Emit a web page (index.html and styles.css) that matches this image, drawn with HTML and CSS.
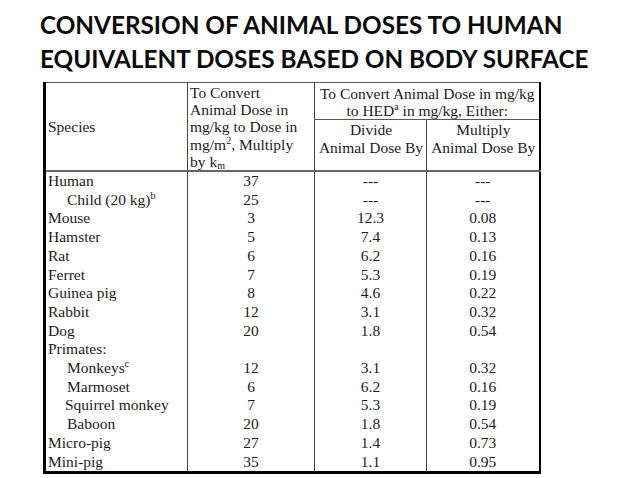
FILE: index.html
```html
<!DOCTYPE html>
<html>
<head>
<meta charset="utf-8">
<link rel="stylesheet" href="styles.css">
</head>
<body>
<div class="slide">
  <h1 class="title">CONVERSION OF ANIMAL DOSES TO HUMAN<br>EQUIVALENT DOSES BASED ON BODY SURFACE</h1>
  <table class="doses">
    <colgroup>
      <col class="c-species">
      <col class="c-km">
      <col class="c-div">
      <col class="c-mul">
    </colgroup>
    <thead>
      <tr class="h1row">
        <th rowspan="2" class="h-species">Species</th>
        <th rowspan="2" class="h-km">To Convert<br>Animal Dose in<br>mg/kg to Dose in<br>mg/m<sup>2</sup>, Multiply<br>by k<sub>m</sub></th>
        <th colspan="2" class="h-hed">To Convert Animal Dose in mg/kg<br>to HED<sup>a</sup> in mg/kg, Either:</th>
      </tr>
      <tr class="h2row">
        <th class="h-sub">Divide<br>Animal Dose By</th>
        <th class="h-sub">Multiply<br>Animal Dose By</th>
      </tr>
    </thead>
    <tbody>
      <tr><td class="sp">Human</td><td>37</td><td>---</td><td>---</td></tr>
      <tr><td class="sp ind">Child (20 kg)<sup>b</sup></td><td>25</td><td>---</td><td>---</td></tr>
      <tr><td class="sp">Mouse</td><td>3</td><td>12.3</td><td>0.08</td></tr>
      <tr><td class="sp">Hamster</td><td>5</td><td>7.4</td><td>0.13</td></tr>
      <tr><td class="sp">Rat</td><td>6</td><td>6.2</td><td>0.16</td></tr>
      <tr><td class="sp">Ferret</td><td>7</td><td>5.3</td><td>0.19</td></tr>
      <tr><td class="sp">Guinea pig</td><td>8</td><td>4.6</td><td>0.22</td></tr>
      <tr><td class="sp">Rabbit</td><td>12</td><td>3.1</td><td>0.32</td></tr>
      <tr><td class="sp">Dog</td><td>20</td><td>1.8</td><td>0.54</td></tr>
      <tr><td class="sp">Primates:</td><td></td><td></td><td></td></tr>
      <tr><td class="sp ind">Monkeys<sup>c</sup></td><td>12</td><td>3.1</td><td>0.32</td></tr>
      <tr><td class="sp ind">Marmoset</td><td>6</td><td>6.2</td><td>0.16</td></tr>
      <tr><td class="sp ind2">Squirrel monkey</td><td>7</td><td>5.3</td><td>0.19</td></tr>
      <tr><td class="sp ind">Baboon</td><td>20</td><td>1.8</td><td>0.54</td></tr>
      <tr><td class="sp">Micro-pig</td><td>27</td><td>1.4</td><td>0.73</td></tr>
      <tr><td class="sp">Mini-pig</td><td>35</td><td>1.1</td><td>0.95</td></tr>
    </tbody>
  </table>
</div>
</body>
</html>
```

FILE: styles.css
```css
html, body {
  margin: 0;
  padding: 0;
  background: #ffffff;
}

.slide {
  width: 638px;
  height: 478px;
  overflow: hidden;
  padding: 8px 0 0 0;
  box-sizing: border-box;
}

.title {
  margin: 0 0 6px 40px;
  font-family: Lato, "Open Sans", sans-serif;
  font-weight: 700;
  font-size: 24.3px;
  line-height: 34px;
  color: #0a0a0a;
  white-space: nowrap;
}

.doses {
  margin-left: 43px;
  border-collapse: collapse;
  table-layout: fixed;
  width: 497px;
  font-family: "Liberation Serif", "Times New Roman", serif;
  font-size: 15.5px;
  color: #1c1c1c;
  border-top: 1px solid #333;
  border-left: 3px solid #000;
  border-right: 2px solid #000;
  border-bottom: 3px solid #000;
}

.c-species { width: 143px; }
.c-km { width: 127px; }
.c-div { width: 112px; }
.c-mul { width: 113px; }

.doses th {
  font-weight: 400;
  line-height: 17.2px;
  padding: 0 1px 0 2px;
  border-left: 1px solid #444;
  border-right: 1px solid #444;
  border-top: 1px solid #555;
  border-bottom: 1px solid #555;
  white-space: nowrap;
}

.doses thead tr.h2row th {
  border-bottom: 2px solid #666;
}

.h-species {
  text-align: left;
  vertical-align: middle;
  border-bottom: 2px solid #666 !important;
}

.h-km {
  text-align: left;
  vertical-align: top;
  padding-top: 1px !important;
  border-bottom: 2px solid #666 !important;
}

.h-hed {
  text-align: center;
  vertical-align: top;
  height: 33px;
  padding-top: 2px !important;
}

.h-sub {
  text-align: center;
  vertical-align: top;
  padding-top: 1px !important;
}

.doses td {
  height: 18.7px;
  line-height: 18.7px;
  padding: 0;
  text-align: center;
  border-left: 1px solid #444;
  border-right: 1px solid #444;
  white-space: nowrap;
}

.doses td.sp {
  text-align: left;
  padding-left: 2px;
}

.doses td.ind {
  padding-left: 21px;
}

.doses td.ind2 {
  padding-left: 19px;
}

sup {
  font-size: 10px;
  line-height: 0;
  vertical-align: 6px;
}

sub {
  font-size: 10px;
  line-height: 0;
  vertical-align: -2px;
}
```
